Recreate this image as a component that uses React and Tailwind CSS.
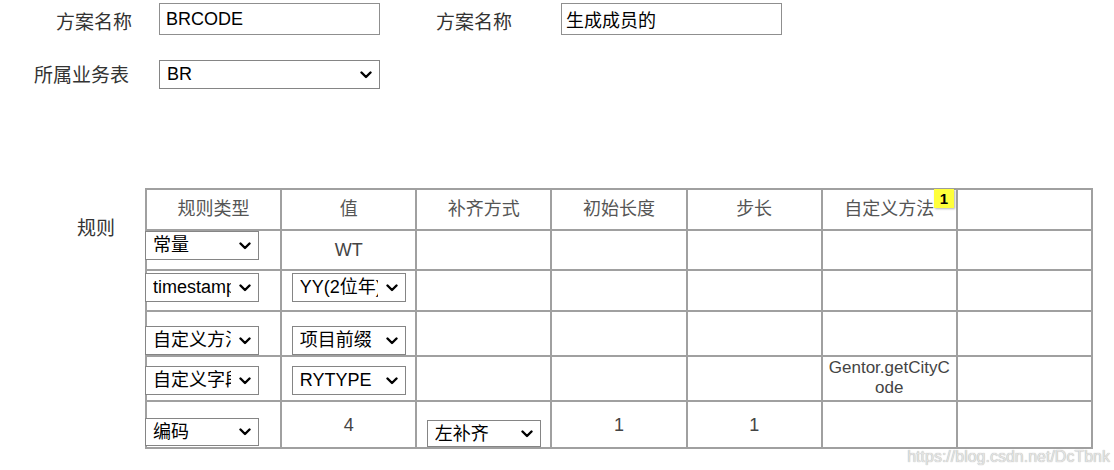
import React from 'react';

const font = "font-['Liberation_Sans','Noto_Sans_CJK_SC',sans-serif]";

function Chevron() {
    return (
        <svg className="pointer-events-none absolute right-[8px] top-1/2 -translate-y-1/2" width="12" height="8" viewBox="0 0 12 8">
            <path d="M1.5 1.5 L6 6 L10.5 1.5" fill="none" stroke="#000" strokeWidth="2.4" strokeLinecap="round" strokeLinejoin="round" />
        </svg>
    );
}

function Select({ value, width = 'w-[114px]', height = 'h-[29px]', className = '' }) {
    return (
        <div className={`relative inline-block align-top ${width} ${height} ${className}`}>
            <select
                defaultValue={value}
                className={`appearance-none block w-full h-full bg-white border border-[#858585] pl-[7px] pr-[27px] text-[18px] text-black ${font} outline-none`}
            >
                <option value={value}>{value}</option>
            </select>
            <Chevron />
        </div>
    );
}

const headers = ['规则类型', '值', '补齐方式', '初始长度', '步长', '自定义方法', ''];

const cell = 'border border-[#a0a0a0] p-0';

export default function App() {
    return (
        <div className={`relative w-[1114px] h-[470px] overflow-hidden bg-white text-[18px] ${font}`}>
            {/* form head */}
            <div className="flex items-start pt-[3px]">
                <div className="w-[132px] text-right text-[19px] text-[#333] leading-[20px] mt-[10px]">方案名称</div>
                <input
                    defaultValue="BRCODE"
                    className={`ml-[27px] w-[221px] h-[32px] border border-[#8f8f8f] px-[6px] text-[18px] text-black outline-none ${font}`}
                />
                <div className="w-[132px] text-right text-[19px] text-[#333] leading-[20px] mt-[10px]">方案名称</div>
                <input
                    defaultValue="生成成员的"
                    className={`ml-[49px] w-[221px] h-[32px] border border-[#8f8f8f] px-[4px] text-[18px] text-black outline-none ${font}`}
                />
            </div>
            <div className="flex items-start mt-[25px]">
                <div className="w-[129px] text-right text-[19px] text-[#333] leading-[20px] mt-[6px]">所属业务表</div>
                <div className="ml-[30px]">
                    <Select value="BR" width="w-[221px]" height="h-[29px]" />
                </div>
            </div>

            {/* rules */}
            <div className="flex items-start mt-[99px]">
                <div className="w-[115px] text-right text-[19px] text-[#333] leading-[20px] mt-[31px]">规则</div>
                <table className="ml-[30px] w-[948px] table-fixed border-separate border-spacing-0 border border-[#a0a0a0] text-[#444]">
                    <thead>
                        <tr className="h-[41px]">
                            {headers.map((h, i) => (
                                <th key={i} className={`${cell} relative font-normal text-center align-middle text-[#555]`}>
                                    {h}
                                    {i === 5 && (
                                        <span className="absolute right-[2px] -top-px w-[20px] h-[19px] bg-[#ffff3a] shadow-[1px_1px_2px_rgba(0,0,0,0.3)] text-black font-bold text-[15px] leading-[19px] text-center">1</span>
                                    )}
                                </th>
                            ))}
                        </tr>
                    </thead>
                    <tbody>
                        <tr className="h-[40px]">
                            <td className={`${cell} align-top`}><Select value="常量" className="-ml-[2px]" /></td>
                            <td className={`${cell} text-center align-middle`}>WT</td>
                            <td className={cell}></td>
                            <td className={cell}></td>
                            <td className={cell}></td>
                            <td className={cell}></td>
                            <td className={cell}></td>
                        </tr>
                        <tr className="h-[41px]">
                            <td className={`${cell} align-top pt-[2px]`}><Select value="timestamp" className="-ml-[2px]" /></td>
                            <td className={`${cell} align-top pt-[2px] text-center`}><Select value="YY(2位年)" /></td>
                            <td className={cell}></td>
                            <td className={cell}></td>
                            <td className={cell}></td>
                            <td className={cell}></td>
                            <td className={cell}></td>
                        </tr>
                        <tr className="h-[45px]">
                            <td className={`${cell} align-top pt-[14px]`}><Select value="自定义方法" className="-ml-[2px]" /></td>
                            <td className={`${cell} align-top pt-[14px] text-center`}><Select value="项目前缀" /></td>
                            <td className={cell}></td>
                            <td className={cell}></td>
                            <td className={cell}></td>
                            <td className={cell}></td>
                            <td className={cell}></td>
                        </tr>
                        <tr className="h-[45px]">
                            <td className={`${cell} align-top pt-[9px]`}><Select value="自定义字段" className="-ml-[2px]" /></td>
                            <td className={`${cell} align-top pt-[9px] text-center`}><Select value="RYTYPE" /></td>
                            <td className={cell}></td>
                            <td className={cell}></td>
                            <td className={cell}></td>
                            <td className={`${cell} align-top pt-px px-[3px] text-center text-[17px] leading-[20px] break-all`}>Gentor.getCityCode</td>
                            <td className={cell}></td>
                        </tr>
                        <tr className="h-[45px]">
                            <td className={`${cell} align-top pt-[16px]`}><Select value="编码" height="h-[28px]" className="-ml-[2px]" /></td>
                            <td className={`${cell} align-top pt-[13px] text-center leading-[20px]`}>4</td>
                            <td className={`${cell} align-top pt-[18px] text-center`}><Select value="左补齐" height="h-[27px]" /></td>
                            <td className={`${cell} align-top pt-[13px] text-center leading-[20px]`}>1</td>
                            <td className={`${cell} align-top pt-[13px] text-center leading-[20px]`}>1</td>
                            <td className={cell}></td>
                            <td className={cell}></td>
                        </tr>
                    </tbody>
                </table>
            </div>

            {/* watermark */}
            <div className="absolute right-[4px] top-[447px] text-[16px] leading-[20px] text-[#e4e4e4] [text-shadow:0_0_1px_#9a9a9a]">
                https://blog.csdn.net/DcTbnk
            </div>
        </div>
    );
}
